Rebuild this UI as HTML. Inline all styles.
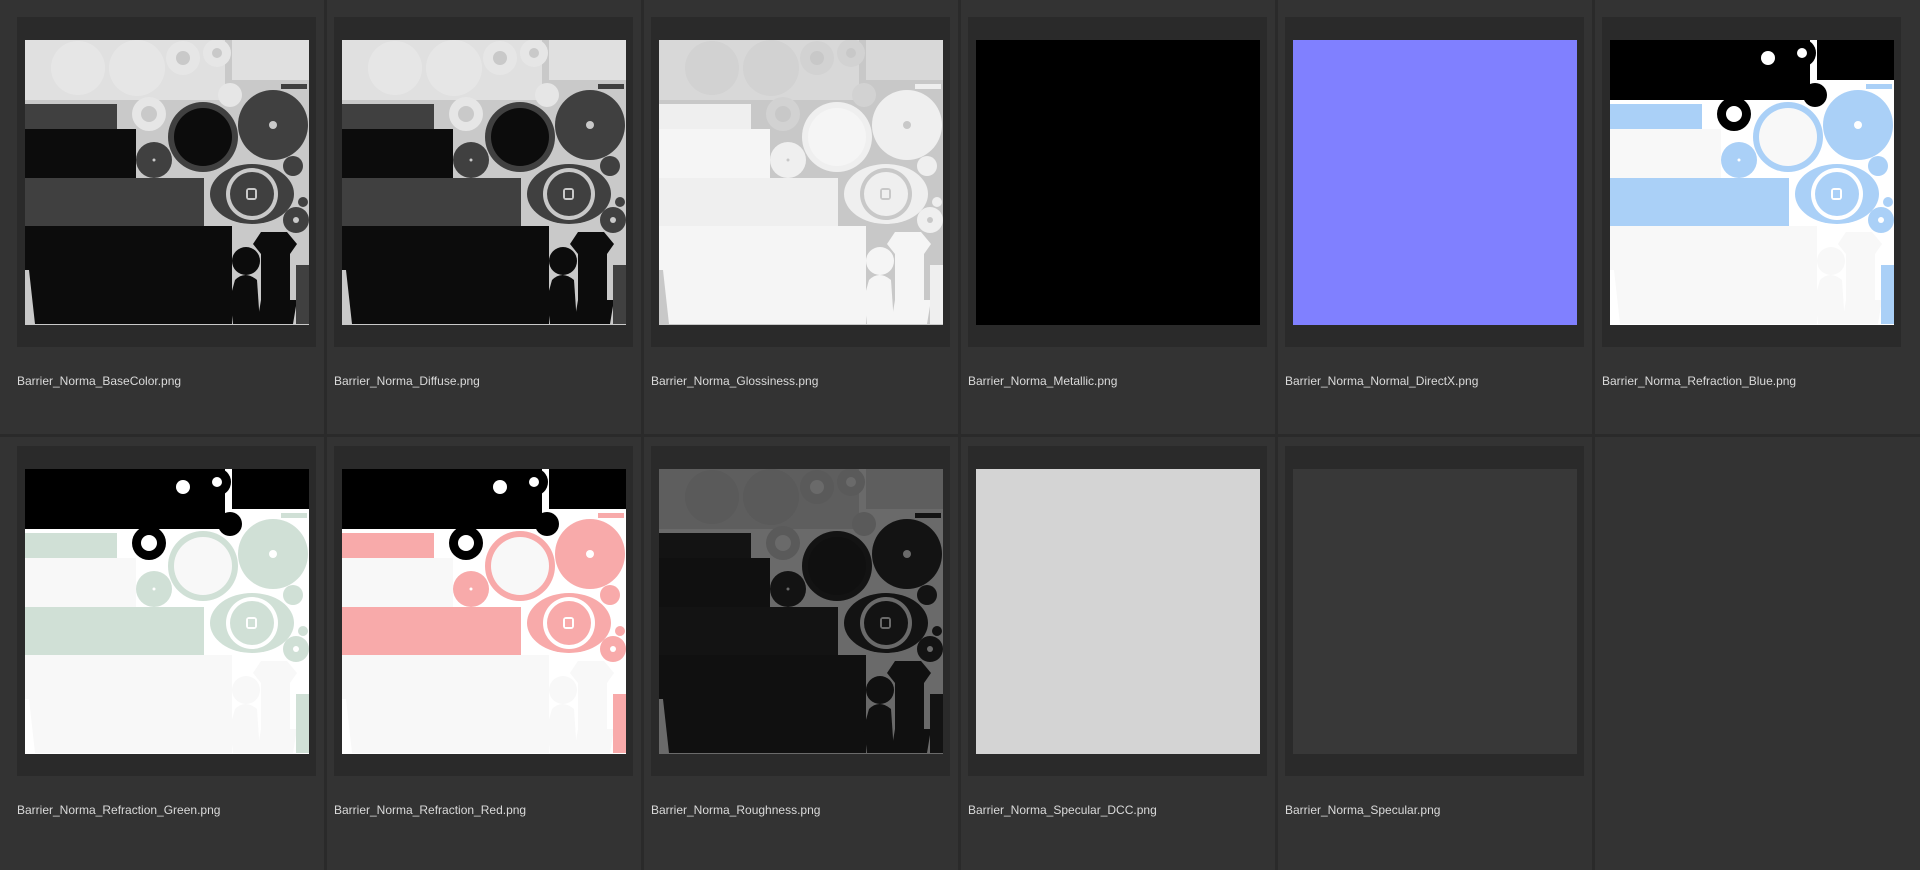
<!DOCTYPE html>
<html><head><meta charset="utf-8">
<style>
html,body{margin:0;padding:0;width:1920px;height:870px;overflow:hidden;background:#333333;font-family:"Liberation Sans",sans-serif;}
.vd{position:absolute;top:0;width:3px;height:870px;background:#2a2a2a;}
.hd{position:absolute;left:0;width:1920px;height:3px;top:434px;background:#2a2a2a;}
.cell{position:absolute;width:317px;height:429px;}
.card{position:absolute;left:17px;top:17px;width:299px;height:330px;background:#2a2a2a;}
.img{position:absolute;left:8px;top:23px;width:284px;height:285px;}
.img svg{display:block;width:284px;height:285px;}
.lbl{position:absolute;left:17px;top:374px;font-size:12px;color:#dadada;white-space:nowrap;}
</style></head><body>
<svg width="0" height="0" style="position:absolute">
<defs>
<g id="atlas">
<rect x="0" y="0" width="284" height="285" fill="var(--bg)"/>
<rect x="0" y="0" width="200" height="60" fill="var(--lt)"/>
<rect x="207" y="0" width="77" height="40" fill="var(--lt)"/>
<rect x="0" y="0" width="22" height="60" fill="var(--lt)"/>
<circle cx="53" cy="28" r="27" fill="var(--lt2)"/>
<circle cx="112" cy="28" r="28" fill="var(--lt2)"/>
<circle cx="158" cy="18" r="17" fill="var(--lt2)"/>
<circle cx="158" cy="18" r="7" fill="var(--bg)"/>
<circle cx="192" cy="13" r="14" fill="var(--lt2)"/>
<circle cx="192" cy="13" r="5" fill="var(--bg)"/>
<circle cx="124" cy="74" r="17" fill="var(--lt2)"/>
<circle cx="124" cy="74" r="8" fill="var(--bg)"/>
<circle cx="205" cy="55" r="12" fill="var(--lt2)"/>
<rect x="0" y="64" width="92" height="26" fill="var(--md)"/>
<rect x="0" y="89" width="111" height="49" fill="var(--dk)"/>
<rect x="0" y="138" width="179" height="48" fill="var(--md)"/>
<path d="M0 186 H207 V284 H10 L4 230 L0 230Z" fill="var(--dk)"/>
<circle cx="178" cy="97" r="35" fill="var(--md)"/>
<circle cx="174" cy="88" r="14" fill="var(--md)"/>
<circle cx="178" cy="97" r="29" fill="var(--dk)"/>
<circle cx="248" cy="85" r="35" fill="var(--md)"/>
<circle cx="248" cy="85" r="4" fill="var(--bg)"/>
<circle cx="129" cy="120" r="18" fill="var(--md)"/>
<circle cx="129" cy="120" r="1.5" fill="var(--bg)"/>
<ellipse cx="227" cy="154" rx="42" ry="30" fill="var(--md)"/>
<circle cx="227" cy="154" r="26" fill="var(--bg)"/>
<circle cx="227" cy="154" r="22" fill="var(--md)"/>
<rect x="221" y="148" width="11" height="12" rx="3" fill="var(--bg)"/>
<rect x="223" y="150" width="7" height="8" fill="var(--md)"/>
<circle cx="268" cy="126" r="10" fill="var(--md)"/>
<circle cx="278" cy="162" r="5" fill="var(--md)"/>
<circle cx="271" cy="180" r="13" fill="var(--md)"/>
<circle cx="271" cy="180" r="3" fill="var(--bg)"/>
<circle cx="221" cy="221" r="14" fill="var(--dk)"/>
<path d="M236 192 H262 L272 204 L265 214 V260 H272 L268 284 H232 L236 260 V214 L228 204Z" fill="var(--dk)"/>
<path d="M210 240 Q220 230 232 240 L235 284 H208 L205 258Z" fill="var(--dk)"/>
<rect x="271" y="225" width="13" height="59" fill="var(--md)"/>
<rect x="256" y="44" width="26" height="5" fill="var(--md)"/>
</g>
</defs>
</svg>

<div class="vd" style="left:324px"></div>
<div class="vd" style="left:641px"></div>
<div class="vd" style="left:958px"></div>
<div class="vd" style="left:1275px"></div>
<div class="vd" style="left:1592px"></div>
<div class="hd"></div>

<div class="cell" style="left:0;top:0"><div class="card"><div class="img" style="--bg:#c9c9c9;--lt:#e0e0e0;--lt2:#e6e6e6;--dk:#0c0c0c;--md:#404040"><svg viewBox="0 0 284 285"><use href="#atlas"/></svg></div></div><div class="lbl">Barrier_Norma_BaseColor.png</div></div>
<div class="cell" style="left:317px;top:0"><div class="card"><div class="img" style="--bg:#c9c9c9;--lt:#e0e0e0;--lt2:#e6e6e6;--dk:#0c0c0c;--md:#404040"><svg viewBox="0 0 284 285"><use href="#atlas"/></svg></div></div><div class="lbl">Barrier_Norma_Diffuse.png</div></div>
<div class="cell" style="left:634px;top:0"><div class="card"><div class="img" style="--bg:#c8c8c8;--lt:#d8d8d8;--lt2:#d2d2d2;--dk:#f5f5f5;--md:#efefef"><svg viewBox="0 0 284 285"><use href="#atlas"/></svg></div></div><div class="lbl">Barrier_Norma_Glossiness.png</div></div>
<div class="cell" style="left:951px;top:0"><div class="card"><div class="img" style="background:#000"></div></div><div class="lbl">Barrier_Norma_Metallic.png</div></div>
<div class="cell" style="left:1268px;top:0"><div class="card"><div class="img" style="background:#8080ff"></div></div><div class="lbl">Barrier_Norma_Normal_DirectX.png</div></div>
<div class="cell" style="left:1585px;top:0"><div class="card"><div class="img" style="--bg:#ffffff;--lt:#000000;--lt2:#000000;--dk:#f8f8f8;--md:#aad0f7"><svg viewBox="0 0 284 285"><use href="#atlas"/></svg></div></div><div class="lbl">Barrier_Norma_Refraction_Blue.png</div></div>

<div class="cell" style="left:0;top:429px"><div class="card"><div class="img" style="--bg:#ffffff;--lt:#000000;--lt2:#000000;--dk:#f8f8f8;--md:#d0e0d6"><svg viewBox="0 0 284 285"><use href="#atlas"/></svg></div></div><div class="lbl">Barrier_Norma_Refraction_Green.png</div></div>
<div class="cell" style="left:317px;top:429px"><div class="card"><div class="img" style="--bg:#ffffff;--lt:#000000;--lt2:#000000;--dk:#f8f8f8;--md:#f8aaaa"><svg viewBox="0 0 284 285"><use href="#atlas"/></svg></div></div><div class="lbl">Barrier_Norma_Refraction_Red.png</div></div>
<div class="cell" style="left:634px;top:429px"><div class="card"><div class="img" style="--bg:#6a6a6a;--lt:#5e5e5e;--lt2:#5a5a5a;--dk:#101010;--md:#131313"><svg viewBox="0 0 284 285"><use href="#atlas"/></svg></div></div><div class="lbl">Barrier_Norma_Roughness.png</div></div>
<div class="cell" style="left:951px;top:429px"><div class="card"><div class="img" style="background:#d4d4d4"></div></div><div class="lbl">Barrier_Norma_Specular_DCC.png</div></div>
<div class="cell" style="left:1268px;top:429px"><div class="card"><div class="img" style="background:#383838"></div></div><div class="lbl">Barrier_Norma_Specular.png</div></div>
</body></html>
